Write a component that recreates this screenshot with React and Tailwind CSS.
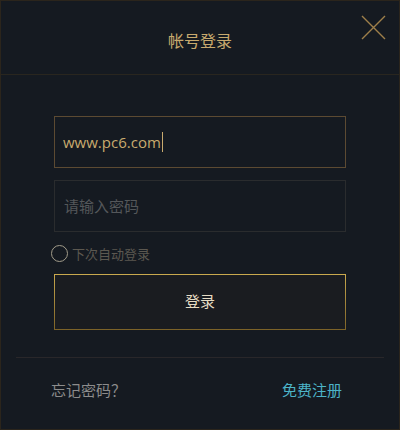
export default function App() {
  return (
    <div
      className="w-[400px] h-[430px] bg-[#151a21] border border-[#2b251c] flex flex-col"
      style={{ fontFamily: '"Noto Sans CJK SC", "Noto Sans", sans-serif' }}
    >
      <div className="h-[74px] shrink-0 border-b border-[#29261f] relative flex items-center justify-center">
        <span className="text-[16px] text-[#c8aa6e] mt-[5px]">帐号登录</span>
        <svg className="absolute left-[360px] top-[14px]" width="25" height="25" viewBox="0 0 25 25">
          <path d="M1 1L24 24M24 1L1 24" stroke="#9e7f4a" strokeWidth="1.4" />
        </svg>
      </div>
      <div className="flex flex-col px-[53px] pt-[41px]">
        <div className="h-[52px] border border-[#5c4a32] flex items-center pl-[8px]">
          <span className="text-[15px] text-[#c8aa6e]" style={{ fontFamily: '"Open Sans", "Noto Sans", sans-serif' }}>www.pc6.com</span>
          <span className="w-px h-[20px] bg-[#c8aa6e] ml-[1px]" />
        </div>
        <div className="h-[52px] border border-[#2a2c2e] flex items-center pl-[9px] mt-[12px]">
          <span className="text-[15px] text-[#54575a]">请输入密码</span>
        </div>
        <div className="flex items-center mt-[12px] -ml-[3px]">
          <span className="w-[17px] h-[17px] rounded-full border-[1.5px] border-[#a29c8a]" />
          <span className="text-[13px] text-[#5c5850] ml-[4px]">下次自动登录</span>
        </div>
        <div className="mt-[10px] p-px bg-gradient-to-b from-[#c9a94e] to-[#7c6228]">
          <div className="h-[54px] bg-[#1a1c20] flex items-center justify-center">
            <span className="text-[15px] text-[#e6dcc4]">登录</span>
          </div>
        </div>
      </div>
      <div className="mx-[15px] mt-[27px] border-t border-[#29272a]" />
      <div className="flex justify-between px-[50px] pt-[21px]">
        <span className="text-[15px] text-[#8c8c8c]">忘记密码？</span>
        <span className="text-[15px] text-[#4cb4c8] mr-[7px]">免费注册</span>
      </div>
    </div>
  );
}
